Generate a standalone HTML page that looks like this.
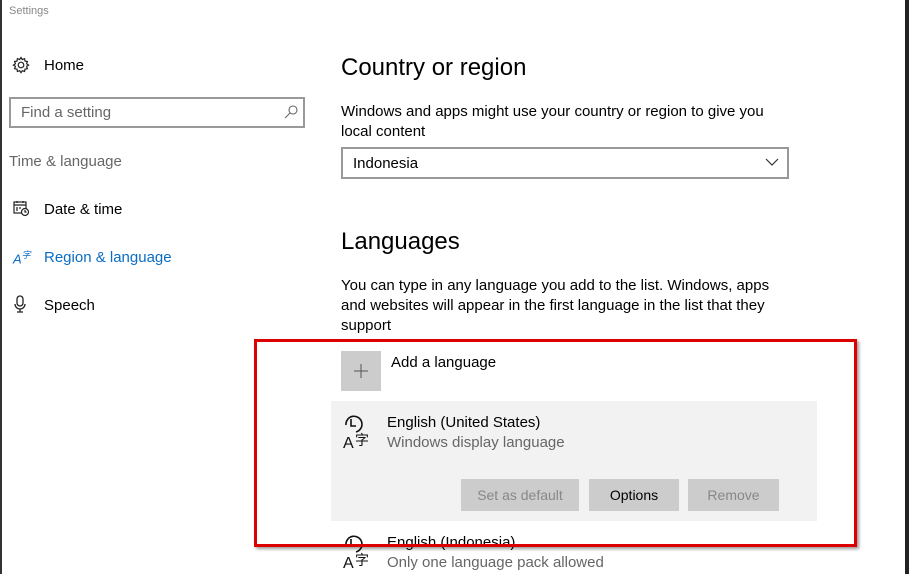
<!DOCTYPE html>
<html><head><style>
*{margin:0;padding:0;box-sizing:border-box}
body{width:909px;height:574px;overflow:hidden;background:#fff;font-family:"Liberation Sans","Noto Sans CJK SC",sans-serif;color:#000;position:relative}
.a{position:absolute;white-space:nowrap}
.btn{position:absolute;height:32px;background:#ccc;font-size:14px;text-align:center;line-height:32px}
</style></head><body>
<div class="a" style="left:0;top:0;width:2px;height:574px;background:#333"></div>
<div class="a" style="right:0;top:0;width:4px;height:574px;background:#222"></div>
<div class="a" style="left:9px;top:5px;font-size:11px;color:#888">Settings</div>
<svg class="a" style="left:12px;top:56px" width="18" height="18" viewBox="0 0 18 18" fill="none" stroke="#222" stroke-width="1.2"><circle cx="9" cy="9" r="2.8"/><path d="M9 1.5l1.3 2 2.3-.8.4 2.4 2.4.4-.8 2.3 2 1.3-2 1.3.8 2.3-2.4.4-.4 2.4-2.3-.8-1.3 2-1.3-2-2.3.8-.4-2.4-2.4-.4.8-2.3-2-1.3 2-1.3-.8-2.3 2.4-.4.4-2.4 2.3.8z"/></svg>
<div class="a" style="left:44px;top:57px;font-size:15px">Home</div>
<div class="a" style="left:9px;top:97px;width:296px;height:31px;border:2px solid #999"></div>
<div class="a" style="left:21px;top:104px;font-size:15px;color:#666">Find a setting</div>
<svg class="a" style="left:283px;top:104px" width="16" height="16" viewBox="0 0 16 16" fill="none" stroke="#666" stroke-width="1.1"><circle cx="10" cy="6" r="4"/><path d="M7 9l-5 5"/></svg>
<div class="a" style="left:9px;top:153px;font-size:15px;color:#666">Time &amp; language</div>
<svg class="a" style="left:13px;top:200px" width="17" height="17" viewBox="0 0 17 17" fill="none" stroke="#222" stroke-width="1.2"><rect x="1" y="2" width="12" height="11"/><path d="M1 5h12M4 1v2M10 1v2M3 8h2M6 8h2M3 10h2"/><circle cx="12" cy="12" r="3.5" fill="#fff"/><path d="M12 10v2h1.5"/></svg>
<div class="a" style="left:44px;top:201px;font-size:15px">Date &amp; time</div>
<div class="a" style="left:13px;top:248px;font-size:13px;color:#0a6cc4;font-style:italic">A<sup style="font-size:9px">字</sup></div>
<div class="a" style="left:44px;top:249px;font-size:15px;color:#0a6cc4">Region &amp; language</div>
<svg class="a" style="left:13px;top:295px" width="14" height="18" viewBox="0 0 14 18" fill="none" stroke="#222" stroke-width="1.3"><rect x="4" y="1" width="6" height="10" rx="3"/><path d="M2 9a5 5 0 0 0 10 0M7 14v3M4 17h6"/></svg>
<div class="a" style="left:44px;top:297px;font-size:15px">Speech</div>

<div class="a" style="left:341px;top:54px;font-size:24px">Country or region</div>
<div class="a" style="left:341px;top:102px;font-size:15px;line-height:20px">Windows and apps might use your country or region to give you<br>local content</div>
<div class="a" style="left:341px;top:147px;width:448px;height:32px;border:2px solid #999"></div>
<div class="a" style="left:353px;top:155px;font-size:15px">Indonesia</div>
<svg class="a" style="left:765px;top:157px" width="14" height="10" viewBox="0 0 14 10" fill="none" stroke="#333" stroke-width="1.2"><path d="M1 2l6 6 6-6"/></svg>
<div class="a" style="left:341px;top:228px;font-size:24px">Languages</div>
<div class="a" style="left:341px;top:276px;font-size:15px;line-height:20px">You can type in any language you add to the list. Windows, apps<br>and websites will appear in the first language in the list that they<br>support</div>
<div class="a" style="left:341px;top:351px;width:40px;height:40px;background:#ccc"></div>
<svg class="a" style="left:351px;top:361px" width="20" height="20" viewBox="0 0 20 20" stroke="#555" stroke-width="1"><path d="M10 3v14M3 10h14"/></svg>
<div class="a" style="left:391px;top:354px;font-size:15px">Add a language</div>
<div class="a" style="left:331px;top:401px;width:486px;height:120px;background:#f2f2f2"></div>
<svg class="a" style="left:341px;top:413px" width="36" height="36" viewBox="0 0 36 36" fill="none" stroke="#111" stroke-width="1.6"><path d="M5 12a8 8 0 1 1 10 7"/><path d="M10 6v7h5"/><text x="2" y="35" font-size="16" fill="#111" stroke="none" font-family="Liberation Sans">A</text><text x="14" y="32" font-size="14" fill="#111" stroke="none" font-family="Noto Sans CJK SC">字</text></svg>
<div class="a" style="left:387px;top:414px;font-size:15px">English (United States)</div>
<div class="a" style="left:387px;top:434px;font-size:15px;color:#666">Windows display language</div>
<div class="btn" style="left:461px;top:479px;width:118px;color:#888">Set as default</div>
<div class="btn" style="left:589px;top:479px;width:90px;color:#000">Options</div>
<div class="btn" style="left:688px;top:479px;width:91px;color:#888">Remove</div>
<svg class="a" style="left:341px;top:533px" width="36" height="36" viewBox="0 0 36 36" fill="none" stroke="#111" stroke-width="1.6"><path d="M5 12a8 8 0 1 1 10 7"/><path d="M10 6v7h5"/><text x="2" y="35" font-size="16" fill="#111" stroke="none" font-family="Liberation Sans">A</text><text x="14" y="32" font-size="14" fill="#111" stroke="none" font-family="Noto Sans CJK SC">字</text></svg>
<div class="a" style="left:387px;top:534px;font-size:15px">English (Indonesia)</div>
<div class="a" style="left:387px;top:554px;font-size:15px;color:#666">Only one language pack allowed</div>
<div class="a" style="left:254px;top:339px;width:603px;height:208px;border:3px solid #d00;box-shadow:2px 2px 3px rgba(0,0,0,.4)"></div>
</body></html>
